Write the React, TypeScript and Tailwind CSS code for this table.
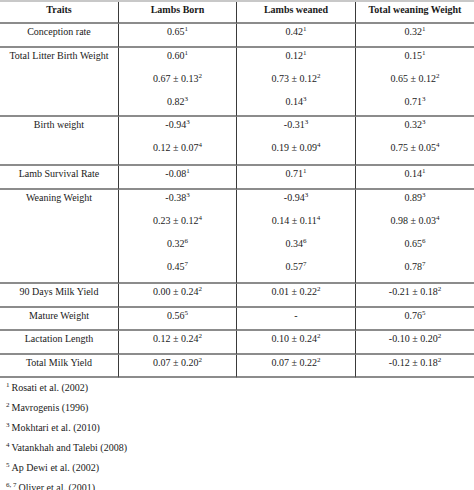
type Val = [string, string]

interface Row {
  trait: string
  h: string
  vals: Val[][]
}

const rows: Row[] = [
  { trait: 'Conception rate', h: 'h-[24px]', vals: [[['0.65', '1']], [['0.42', '1']], [['0.32', '1']]] },
  {
    trait: 'Total Litter Birth Weight',
    h: 'h-[69px]',
    vals: [
      [['0.60', '1'], ['0.67 ± 0.13', '2'], ['0.82', '3']],
      [['0.12', '1'], ['0.73 ± 0.12', '2'], ['0.14', '3']],
      [['0.15', '1'], ['0.65 ± 0.12', '2'], ['0.71', '3']],
    ],
  },
  {
    trait: 'Birth weight',
    h: 'h-[49px]',
    vals: [
      [['-0.94', '3'], ['0.12 ± 0.07', '4']],
      [['-0.31', '3'], ['0.19 ± 0.09', '4']],
      [['0.32', '3'], ['0.75 ± 0.05', '4']],
    ],
  },
  { trait: 'Lamb Survival Rate', h: 'h-[24px]', vals: [[['-0.08', '1']], [['0.71', '1']], [['0.14', '1']]] },
  {
    trait: 'Weaning Weight',
    h: 'h-[94px]',
    vals: [
      [['-0.38', '3'], ['0.23 ± 0.12', '4'], ['0.32', '6'], ['0.45', '7']],
      [['-0.94', '3'], ['0.14 ± 0.11', '4'], ['0.34', '6'], ['0.57', '7']],
      [['0.89', '3'], ['0.98 ± 0.03', '4'], ['0.65', '6'], ['0.78', '7']],
    ],
  },
  { trait: '90 Days Milk Yield', h: 'h-[24px]', vals: [[['0.00 ± 0.24', '2']], [['0.01 ± 0.22', '2']], [['-0.21 ± 0.18', '2']]] },
  { trait: 'Mature Weight', h: 'h-[23px]', vals: [[['0.56', '5']], [['-', '']], [['0.76', '5']]] },
  { trait: 'Lactation Length', h: 'h-[24px]', vals: [[['0.12 ± 0.24', '2']], [['0.10 ± 0.24', '2']], [['-0.10 ± 0.20', '2']]] },
  { trait: 'Total Milk Yield', h: 'h-[23px]', vals: [[['0.07 ± 0.20', '2']], [['0.07 ± 0.22', '2']], [['-0.12 ± 0.18', '2']]] },
]

const notes: Val[] = [
  ['1', 'Rosati et al. (2002)'],
  ['2', 'Mavrogenis (1996)'],
  ['3', 'Mokhtari et al. (2010)'],
  ['4', 'Vatankhah and Talebi (2008)'],
  ['5', 'Ap Dewi et al. (2002)'],
  ['6, 7', 'Oliver et al. (2001)'],
]

function Line({ v }: { v: Val }) {
  return (
    <div className="h-[23px] leading-[13px]">
      {v[0]}
      {v[1] && <sup className="text-[7px] align-[1px]">{v[1]}</sup>}
    </div>
  )
}

export default function App() {
  const headers = ['Traits', 'Lambs Born', 'Lambs weaned', 'Total weaning Weight']
  return (
    <div className="w-[474px] h-[490px] overflow-hidden bg-white text-[10px] text-[#1a1a1a] font-['Liberation_Serif','Times_New_Roman',serif]">
      <div className="grid grid-cols-[119px_118px_119px_1fr] border-t-2 border-[#c8c8c8]">
        {headers.map((t, i) => (
          <div
            key={t}
            className={`h-[22px] pt-px font-bold text-center leading-[13px] border-b-2 border-[#8c8c8c] ${i < 3 ? 'border-r border-r-[#3a3a3a]' : ''}`}
          >
            {t}
          </div>
        ))}
        {rows.map((r) => (
          <div key={r.trait} className="contents">
            <div className={`${r.h} pt-px text-center leading-[13px] border-b-2 border-[#8c8c8c] border-r border-r-[#3a3a3a]`}>
              {r.trait}
            </div>
            {r.vals.map((col, i) => (
              <div
                key={i}
                className={`${r.h} pt-px text-center border-b-2 border-[#8c8c8c] ${i < 2 ? 'border-r border-r-[#3a3a3a]' : ''}`}
              >
                {col.map((v, j) => (
                  <Line key={j} v={v} />
                ))}
              </div>
            ))}
          </div>
        ))}
      </div>
      <div className="pt-[3px] pl-[6px]">
        {notes.map(([s, t]) => (
          <div key={t} className="h-[20px] leading-[13px]">
            <sup className="text-[7px] align-[1px] mr-[2px]">{s}</sup>
            {t}
          </div>
        ))}
      </div>
    </div>
  )
}
